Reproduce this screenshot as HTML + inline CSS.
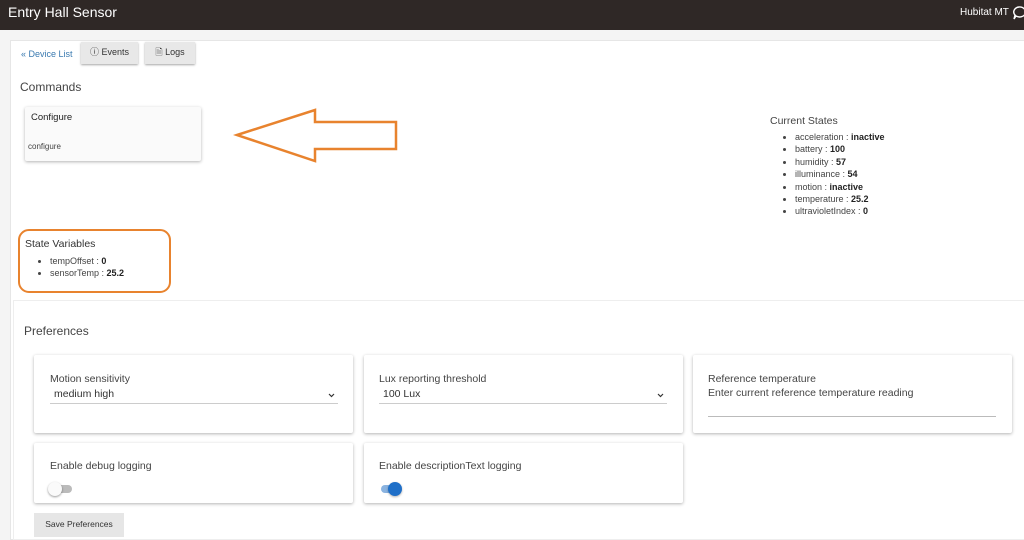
<!DOCTYPE html>
<html><head><style>
*{box-sizing:border-box;margin:0;padding:0}
body{width:1024px;height:532px;overflow:hidden;background:#f4f4f4;font-family:"Liberation Sans",sans-serif;color:#333;position:relative}
.hdr{position:absolute;left:0;top:0;width:1024px;height:30px;background:#2f2826;color:#fff}
.abs{position:absolute}
.panel{position:absolute;left:10px;top:40px;width:1020px;height:500px;background:#fff;border:1px solid #e6e6e6}
.btn{position:absolute;background:#e8e8e8;box-shadow:0 1px 2px rgba(0,0,0,.35);font-size:9px;color:#333;text-align:center}
ul{list-style:disc;font-size:9px;line-height:12.4px;color:#444}
ul b{color:#222}
.card{position:absolute;background:#fff;box-shadow:0 1px 3px rgba(0,0,0,.3);border-radius:2px}
.lbl{position:absolute;font-size:10.5px;color:#444}
.sel{position:absolute;border-bottom:1px solid #ccc;font-size:10.5px;color:#333;height:16px}
.sel svg{position:absolute;right:3px;top:5px}
</style></head><body>
<div class="hdr"><div class="abs" style="left:8px;top:4px;font-size:14px">Entry Hall Sensor</div>
<div class="abs" style="left:960px;top:7px;font-size:10px">Hubitat MT</div>
<svg class="abs" style="left:1013px;top:5px" width="14" height="16"><path d="M6 2a6 5 0 1 1 -3 9l-2 3l1 -4a6 5 0 0 1 4 -8z" fill="none" stroke="#fff" stroke-width="1.4"/></svg></div>
<div class="panel"></div>
<div class="abs" style="left:21px;top:49px;font-size:9px;color:#3a7ab0">« Device List</div>
<div class="btn" style="left:81px;top:42px;width:57px;height:22px;line-height:20px">ⓘ Events</div>
<div class="btn" style="left:145px;top:42px;width:50px;height:22px;line-height:20px">🗎 Logs</div>
<div class="abs" style="left:20px;top:80px;font-size:12px;color:#444">Commands</div>
<div class="card" style="left:25px;top:107px;width:176px;height:54px;background:#fafafa"><div class="abs" style="left:6px;top:5px;font-size:9.5px;color:#222">Configure</div><div class="abs" style="left:3px;top:35px;font-size:8px;color:#444">configure</div></div>
<svg class="abs" style="left:230px;top:105px" width="175" height="60"><path d="M7 30 L85 5 L85 17 L166 17 L166 44 L85 44 L85 56 Z" fill="none" stroke="#e8832e" stroke-width="2.5" stroke-linejoin="miter"/></svg>
<div class="abs" style="left:770px;top:115px;font-size:10.5px;color:#444">Current States</div>
<ul class="abs" style="left:795px;top:131px">
<li>acceleration : <b>inactive</b></li><li>battery : <b>100</b></li><li>humidity : <b>57</b></li><li>illuminance : <b>54</b></li><li>motion : <b>inactive</b></li><li>temperature : <b>25.2</b></li><li>ultravioletIndex : <b>0</b></li></ul>
<div class="abs" style="left:18px;top:229px;width:153px;height:64px;border:2.5px solid #e8832e;border-radius:11px"></div>
<div class="abs" style="left:25px;top:238px;font-size:10.5px;color:#333">State Variables</div>
<ul class="abs" style="left:50px;top:255px"><li>tempOffset : <b>0</b></li><li>sensorTemp : <b>25.2</b></li></ul>
<div class="abs" style="left:13px;top:300px;width:1011px;height:240px;border:1px solid #eee;border-right:none;background:#fff"></div>
<div class="abs" style="left:24px;top:324px;font-size:12px;color:#444">Preferences</div>
<div class="card" style="left:34px;top:355px;width:319px;height:78px"></div>
<div class="card" style="left:364px;top:355px;width:319px;height:78px"></div>
<div class="card" style="left:693px;top:355px;width:319px;height:78px"></div>
<div class="card" style="left:34px;top:443px;width:319px;height:60px"></div>
<div class="card" style="left:364px;top:443px;width:319px;height:60px"></div>
<div class="lbl" style="left:50px;top:373px">Motion sensitivity</div>
<div class="sel" style="left:50px;top:388px;width:288px;padding-left:4px">medium high<svg width="7" height="5"><path d="M1 1l2.5 2.5L6 1" fill="none" stroke="#333" stroke-width="1.2"/></svg></div>
<div class="lbl" style="left:379px;top:373px">Lux reporting threshold</div>
<div class="sel" style="left:379px;top:388px;width:288px;padding-left:4px">100 Lux<svg width="7" height="5"><path d="M1 1l2.5 2.5L6 1" fill="none" stroke="#333" stroke-width="1.2"/></svg></div>
<div class="lbl" style="left:708px;top:373px">Reference temperature</div>
<div class="lbl" style="left:708px;top:387px">Enter current reference temperature reading</div>
<div class="abs" style="left:708px;top:416px;width:288px;border-bottom:1px solid #bbb"></div>
<div class="lbl" style="left:50px;top:460px">Enable debug logging</div>
<div class="abs" style="left:52px;top:485px;width:20px;height:8px;border-radius:4px;background:#bbb"></div>
<div class="abs" style="left:48px;top:482px;width:14px;height:14px;border-radius:50%;background:#fafafa;box-shadow:0 1px 2px rgba(0,0,0,.4)"></div>
<div class="lbl" style="left:379px;top:460px">Enable descriptionText logging</div>
<div class="abs" style="left:381px;top:485px;width:20px;height:8px;border-radius:4px;background:#8ab3e0"></div>
<div class="abs" style="left:388px;top:482px;width:14px;height:14px;border-radius:50%;background:#1f6fc8;box-shadow:0 1px 2px rgba(0,0,0,.3)"></div>
<div class="btn" style="left:34px;top:513px;width:90px;height:24px;line-height:22px;font-size:8.5px;box-shadow:none;background:#e6e6e6">Save Preferences</div>
</body></html>
